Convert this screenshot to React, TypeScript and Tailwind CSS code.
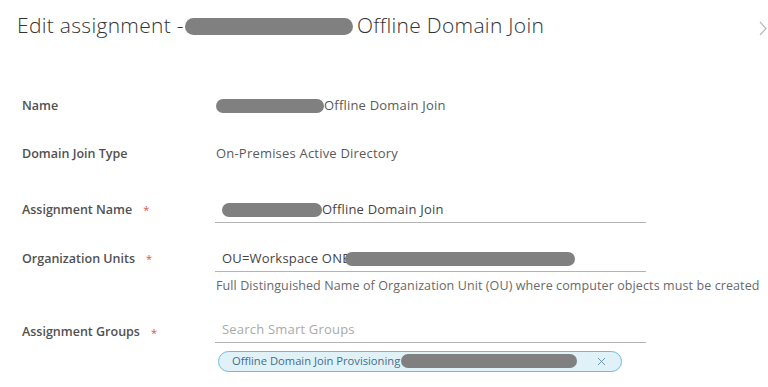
import { X } from "lucide-react";

const font = { fontFamily: "'Open Sans', Lato, sans-serif" };

const Blob = ({ w, className = "" }: { w: number; className?: string }) => (
  <span
    className={`inline-block h-[14px] rounded-full bg-[#808080] align-middle ${className}`}
    style={{ width: w }}
  />
);

const Label = ({ text, required }: { text: string; required?: boolean }) => (
  <div className="flex w-[216px] shrink-0 items-center pl-[22px] text-[12.5px] font-semibold text-[#515151]">
    {text}
    {required && <span className="ml-[11px] text-[11px] font-normal text-[#d9534f]">*</span>}
  </div>
);

const App = () => {
  return (
    <div className="h-[387px] w-[768px] overflow-hidden bg-white" style={font}>
      <div className="flex h-[51px] items-center justify-between pl-[17px] pr-[1px] pt-[1px]">
        <h1 className="flex items-center text-[21px] font-light tracking-[0.3px] text-[#333]">
          Edit assignment -
          <Blob w={168} className="ml-[1px] mr-[4px] h-[17px]" />
          Offline Domain Join
        </h1>
        <svg width="8" height="15" viewBox="0 0 8 15" className="mt-[5px]">
          <path d="M1 1l6 6.5L1 14" fill="none" stroke="#b8b8b8" strokeWidth="1.2" />
        </svg>
      </div>

      <div className="mt-[43px]">
        <div className="flex h-[24px] items-center">
          <Label text="Name" />
          <div className="flex items-center text-[13px] tracking-[0.2px] text-[#5a5a5a]">
            <Blob w={108} />
            Offline Domain Join
          </div>
        </div>

        <div className="mt-[24px] flex h-[24px] items-center">
          <Label text="Domain Join Type" />
          <div className="text-[13px] tracking-[0.2px] text-[#5a5a5a]">On-Premises Active Directory</div>
        </div>

        <div className="mt-[32px] flex h-[25px]">
          <Label text="Assignment Name" required />
          <div className="-ml-[1px] flex w-[431px] items-center border-b border-[#b3b3b3] pl-[7px] text-[13px] tracking-[0.2px] text-[#444]">
            <Blob w={100} />
            Offline Domain Join
          </div>
        </div>

        <div className="mt-[24px] flex h-[25px]">
          <Label text="Organization Units" required />
          <div className="-ml-[1px] flex w-[431px] items-center border-b border-[#b3b3b3] pl-[7px] text-[13px] tracking-[0.2px] text-[#444]">
            OU=Workspace ONE
            <Blob w={230} className="-ml-[5px]" />
          </div>
        </div>
        <div className="ml-[216px] mt-[5px] text-[12.5px] tracking-[0.1px] text-[#6a6a6a]">
          Full Distinguished Name of Organization Unit (OU) where computer objects must be created
        </div>

        <div className="mt-[22px] flex h-[25px]">
          <div className="flex pt-[5px]">
            <Label text="Assignment Groups" required />
          </div>
          <div className="-ml-[1px] flex w-[431px] items-center border-b border-[#b3b3b3] pl-[7px] text-[13px] tracking-[0.2px] text-[#aaa]">
            Search Smart Groups
          </div>
        </div>
        <div className="ml-[218px] mt-[8px] flex h-[21px] w-[404px] items-center rounded-full border border-[#6bbbe0] bg-[#e1f1f8] pl-[13px] text-[11.2px] text-[#3f6f8c]">
          Offline Domain Join Provisioning
          <Blob w={176} className="ml-[1px]" />
          <X className="ml-[18px] h-[13px] w-[13px] text-[#5b8aa6]" strokeWidth={1.6} />
        </div>
      </div>
    </div>
  );
};

export default App;
